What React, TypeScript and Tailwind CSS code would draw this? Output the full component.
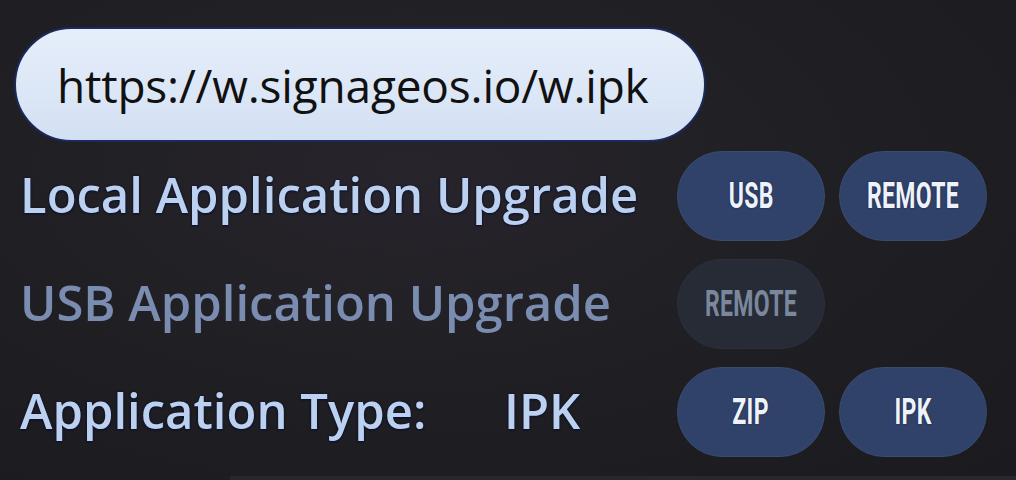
import React from "react";

const labelShadow = "[text-shadow:0_0_2px_#0b1230,0_1px_2px_#0b1230]";
const labelFont = { fontFamily: "'Open Sans', Lato, sans-serif", fontVariantLigatures: "none" as const };

function Pill({ label, disabled = false }: { label: string; disabled?: boolean }) {
  return (
    <div
      className={
        "flex h-[90px] w-[148px] items-center justify-center rounded-[46px] border " +
        (disabled
          ? "border-[#2c313d] bg-[#262b36]"
          : "border-[#3b4b6d] bg-[#30426a]")
      }
    >
      <span
        className={
          "inline-block scale-x-[0.64] text-[36px] font-bold leading-none tracking-[0.5px] " +
          (disabled ? "text-[#7b879c]" : "text-[#eef3fb] [text-shadow:0_0_2px_#101a36]")
        }
        style={{ fontFamily: "Roboto, 'DejaVu Sans', sans-serif" }}
      >
        {label}
      </span>
    </div>
  );
}

export default function App() {
  return (
    <div className="flex h-[480px] w-[1016px] flex-col overflow-hidden bg-[radial-gradient(ellipse_at_40%_35%,#27252b_0%,#1f1e23_55%,#1b1a1f_100%)]">
      <div className="flex flex-1 flex-col pl-[14px]">
        {/* URL field */}
        <div className="mt-[27px] flex h-[115px] w-[692px] items-center rounded-full border-2 border-[#1b2a5c] bg-[linear-gradient(180deg,#e6eefa_0%,#dbe6f6_60%,#d3e0f3_100%)] pl-[41px]">
          <span
            className="text-[46px] leading-none text-[#111111] tracking-[-0.2px]"
            style={{ fontFamily: "'Open Sans', 'Noto Sans', sans-serif" }}
          >
            https://w.signageos.io/w.ipk
          </span>
        </div>

        <div className="mt-[9px] flex flex-col gap-[18px] pl-[6px]">
          <div className="flex h-[90px] items-center">
            <span className={"w-[657px] pb-[4px] text-[49px] font-semibold leading-none text-[#bcd0f0] " + labelShadow} style={labelFont}>
              Local Application Upgrade
            </span>
            <div className="flex gap-[14px]">
              <Pill label="USB" />
              <Pill label="REMOTE" />
            </div>
          </div>

          <div className="flex h-[90px] items-center">
            <span className="w-[657px] pb-[4px] text-[49px] font-semibold leading-none text-[#7a8db0]" style={labelFont}>
              USB Application Upgrade
            </span>
            <Pill label="REMOTE" disabled />
          </div>

          <div className="flex h-[90px] items-center">
            <div className={"flex w-[657px] items-center pb-[4px] text-[49px] font-semibold leading-none text-[#bcd0f0] " + labelShadow} style={labelFont}>
              <span className="w-[484px]">Application Type:</span>
              <span>IPK</span>
            </div>
            <div className="flex gap-[14px]">
              <Pill label="ZIP" />
              <Pill label="IPK" />
            </div>
          </div>
        </div>
      </div>
      {/* lower bezel edge */}
      <div className="flex h-[4px]">
        <div className="w-[230px]" />
        <div className="flex-1 bg-[#28282c]" />
      </div>
    </div>
  );
}
